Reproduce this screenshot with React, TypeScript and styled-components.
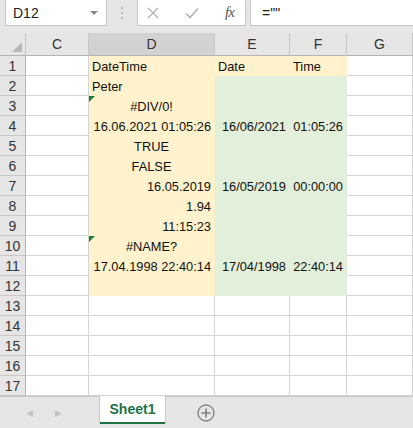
import * as React from "react";
import styled, { createGlobalStyle } from "styled-components";

const GlobalStyle = createGlobalStyle`
  html, body {
    margin: 0;
    padding: 0;
    background: #e6e6e6;
  }
  body {
    font-family: "Liberation Sans", Arial, sans-serif;
    overflow: hidden;
  }
`;

const Page = styled.div`
  width: 413px;
  height: 428px;
  display: flex;
  flex-direction: column;
  background: #e6e6e6;
`;

const TopBar = styled.div`
  height: 33px;
  display: flex;
  align-items: flex-start;
  box-sizing: border-box;
`;

const Box = styled.div<{ $width: number }>`
  width: ${(p) => p.$width}px;
  height: 27px;
  margin-top: -1px;
  background: #fff;
  border: 1px solid #c6c6c6;
  box-sizing: border-box;
  display: flex;
  align-items: center;
`;

const NameBox = styled(Box)`
  margin-left: 5px;
  padding: 0 8px 0 7px;
  justify-content: space-between;
  font-size: 14px;
  color: #222;
`;

const DropArrow = styled.span`
  width: 0;
  height: 0;
  border-left: 4px solid transparent;
  border-right: 4px solid transparent;
  border-top: 4px solid #888;
`;

const Grip = styled.div`
  width: 30px;
  height: 26px;
  display: flex;
  flex-direction: column;
  align-items: center;
  justify-content: center;
  gap: 3px;

  span {
    width: 2px;
    height: 2px;
    background: #b8b8b8;
  }
`;

const IconBox = styled(Box)`
  padding-left: 9px;
  gap: 26px;
  color: #b0b0b0;
`;

const Fx = styled.span`
  font-family: "Liberation Serif", serif;
  font-style: italic;
  font-size: 15px;
  color: #555;
  letter-spacing: -1px;
`;

const FormulaBox = styled(Box)`
  margin-left: 4px;
  flex: 1;
  border-right: none;
  padding-left: 11px;
  font-size: 14px;
  color: #222;
`;

const Sheet = styled.div`
  display: grid;
  grid-template-columns: 26px 63px 126px 75px 57px 66px;
  grid-template-rows: 23px repeat(17, 20px);
  background: #fff;
  font-size: 12.8px;
  color: #111;
`;

const HeadCell = styled.div<{ $selected?: boolean }>`
  background: ${(p) => (p.$selected ? "#d2d2d2" : "#e6e6e6")};
  border-right: 1px solid #c8c8c8;
  border-bottom: 1px solid #b5b5b5;
  box-sizing: border-box;
  display: flex;
  align-items: center;
  justify-content: center;
  font-size: 14px;
  color: #333;
`;

const Corner = styled(HeadCell)`
  align-items: flex-end;
  justify-content: flex-end;
  padding: 0 3px 3px 0;
`;

const RowHead = styled.div`
  background: #e6e6e6;
  border-right: 1px solid #b5b5b5;
  border-bottom: 1px solid #c8c8c8;
  box-sizing: border-box;
  display: flex;
  align-items: center;
  justify-content: center;
  font-size: 14px;
  color: #333;
`;

type Align = "left" | "center" | "right";
type Fill = "none" | "orange" | "green";

const fills: Record<Fill, string> = {
  none: "#fff",
  orange: "#fff2cc",
  green: "#e2efda",
};

const Cell = styled.div<{ $fill: Fill; $align: Align; $flag?: boolean }>`
  position: relative;
  background: ${(p) => fills[p.$fill]};
  border-right: 1px solid ${(p) => (p.$fill === "none" ? "#d4d4d4" : fills[p.$fill])};
  border-bottom: 1px solid ${(p) => (p.$fill === "none" ? "#d4d4d4" : fills[p.$fill])};
  box-sizing: border-box;
  display: flex;
  align-items: center;
  justify-content: ${(p) =>
    p.$align === "left" ? "flex-start" : p.$align === "right" ? "flex-end" : "center"};
  padding: 1px 3px 0;
  white-space: nowrap;

  ${(p) =>
    p.$flag &&
    `
    &::before {
      content: "";
      position: absolute;
      left: 0;
      top: 0;
      border-top: 6px solid #1e7b34;
      border-right: 6px solid transparent;
    }
  `}
`;

const TabBar = styled.div`
  flex: 1;
  display: flex;
  align-items: stretch;
  border-top: 1px solid #c8c8c8;
`;

const NavArrows = styled.div`
  width: 100px;
  display: flex;
  align-items: center;
  padding-left: 26px;
  gap: 22px;
  box-sizing: border-box;
  color: #c4c4c4;
  font-size: 9px;
`;

const Tab = styled.div`
  width: 65px;
  margin-top: -1px;
  height: 28px;
  background: #fff;
  border-bottom: 2px solid #217346;
  box-sizing: border-box;
  display: flex;
  align-items: center;
  justify-content: center;
  font-weight: bold;
  font-size: 14px;
  color: #217346;
  box-shadow: 1px 0 0 #c8c8c8, -1px 0 0 #c8c8c8;
`;

const AddSheet = styled.div`
  margin-left: 32px;
  display: flex;
  align-items: center;
`;

type Row = [string, Align, string, string, boolean?];

const rows: Row[] = [
  ["DateTime", "left", "Date", "Time"],
  ["Peter", "left", "", ""],
  ["#DIV/0!", "center", "", "", true],
  ["16.06.2021 01:05:26", "right", "16/06/2021", "01:05:26"],
  ["TRUE", "center", "", ""],
  ["FALSE", "center", "", ""],
  ["16.05.2019", "right", "16/05/2019", "00:00:00"],
  ["1.94", "right", "", ""],
  ["11:15:23", "right", "", ""],
  ["#NAME?", "center", "", "", true],
  ["17.04.1998 22:40:14", "right", "17/04/1998", "22:40:14"],
  ["", "left", "", ""],
];

const columns = ["C", "D", "E", "F", "G"];

export default function App() {
  const allRows = Array.from({ length: 17 }, (_, i) => rows[i]);

  return (
    <Page>
      <GlobalStyle />
      <TopBar>
        <NameBox $width={102}>
          <span>D12</span>
          <DropArrow />
        </NameBox>
        <Grip>
          <span />
          <span />
          <span />
        </Grip>
        <IconBox $width={109}>
          <svg width="12" height="12" viewBox="0 0 12 12">
            <path d="M1 1 L11 11 M11 1 L1 11" stroke="#b4b4b4" strokeWidth="1.4" fill="none" />
          </svg>
          <svg width="14" height="12" viewBox="0 0 14 12">
            <path d="M1 6.5 L5 10.5 L13 1.5" stroke="#b4b4b4" strokeWidth="1.6" fill="none" />
          </svg>
          <Fx>fx</Fx>
        </IconBox>
        <FormulaBox $width={0}>=""</FormulaBox>
      </TopBar>

      <Sheet>
        <Corner>
          <svg width="10" height="10" viewBox="0 0 10 10">
            <path d="M10 0 L10 10 L0 10 Z" fill="#b9b9b9" />
          </svg>
        </Corner>
        {columns.map((c) => (
          <HeadCell key={c} $selected={c === "D"}>
            {c}
          </HeadCell>
        ))}
        {allRows.map((r, i) => {
          const inData = i < 12;
          const sideFill: Fill = !inData ? "none" : i === 0 ? "orange" : "green";
          return (
            <React.Fragment key={i}>
              <RowHead>{i + 1}</RowHead>
              <Cell $fill="none" $align="left" />
              <Cell $fill={inData ? "orange" : "none"} $align={r ? r[1] : "left"} $flag={r?.[4]}>
                {r?.[0]}
              </Cell>
              <Cell $fill={sideFill} $align={i === 0 ? "left" : "right"}>
                {r?.[2]}
              </Cell>
              <Cell $fill={sideFill} $align={i === 0 ? "left" : "right"}>
                {r?.[3]}
              </Cell>
              <Cell $fill="none" $align="left" />
            </React.Fragment>
          );
        })}
      </Sheet>

      <TabBar>
        <NavArrows>
          <span>◀</span>
          <span>▶</span>
        </NavArrows>
        <Tab>Sheet1</Tab>
        <AddSheet>
          <svg width="18" height="18" viewBox="0 0 18 18">
            <circle cx="9" cy="9" r="8" stroke="#808080" strokeWidth="1.3" fill="none" />
            <path d="M9 4.5 V13.5 M4.5 9 H13.5" stroke="#808080" strokeWidth="1.6" />
          </svg>
        </AddSheet>
      </TabBar>
    </Page>
  );
}
